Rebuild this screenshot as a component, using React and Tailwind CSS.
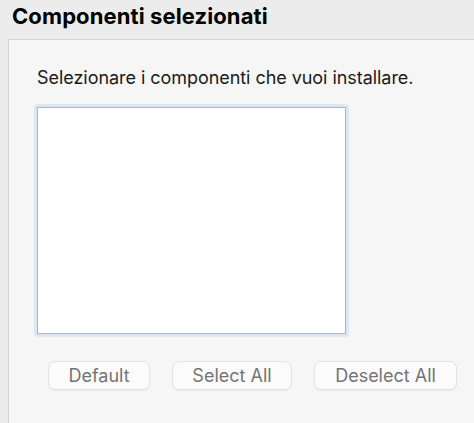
export default function App() {
  const buttons = [
    { label: "Default", w: "w-[102px]" },
    { label: "Select All", w: "w-[120px]" },
    { label: "Deselect All", w: "w-[143px]" },
  ];

  return (
    <div className="w-[474px] h-[423px] overflow-hidden bg-[#ececec] flex flex-col font-['Inter',sans-serif]">
      <div className="h-[39px] pl-[12px] pt-[2px] shrink-0">
        <h1 className="text-[22px] leading-[28px] font-bold text-black tracking-[0.1px]">Componenti selezionati</h1>
      </div>
      <div className="flex-1 ml-[8px] border-l border-t border-[#d4d4d4] bg-[#f6f6f6] flex flex-col">
        <p className="pl-[28px] pt-[27px] text-[18px] leading-[22px] text-[#1a1a1a] tracking-[-0.05px]">
          Selezionare i componenti che vuoi installare.
        </p>
        <div className="ml-[25px] mt-[15px] w-[315px] h-[233px] rounded-[3px] bg-[#dde7f4] p-[3px]">
          <div className="w-full h-full bg-white border border-[#aab4c4]" />
        </div>
        <div className="flex ml-[39px] mt-[24px] gap-[22px]">
          {buttons.map((b) => (
            <button
              key={b.label}
              className={`${b.w} h-[29px] rounded-[7px] bg-[#fbfbfb] border border-[#e2e2e2] shadow-[0_1px_1px_rgba(0,0,0,0.06)] text-[18px] leading-[20px] text-[#747474]`}
            >
              {b.label}
            </button>
          ))}
        </div>
      </div>
    </div>
  );
}
